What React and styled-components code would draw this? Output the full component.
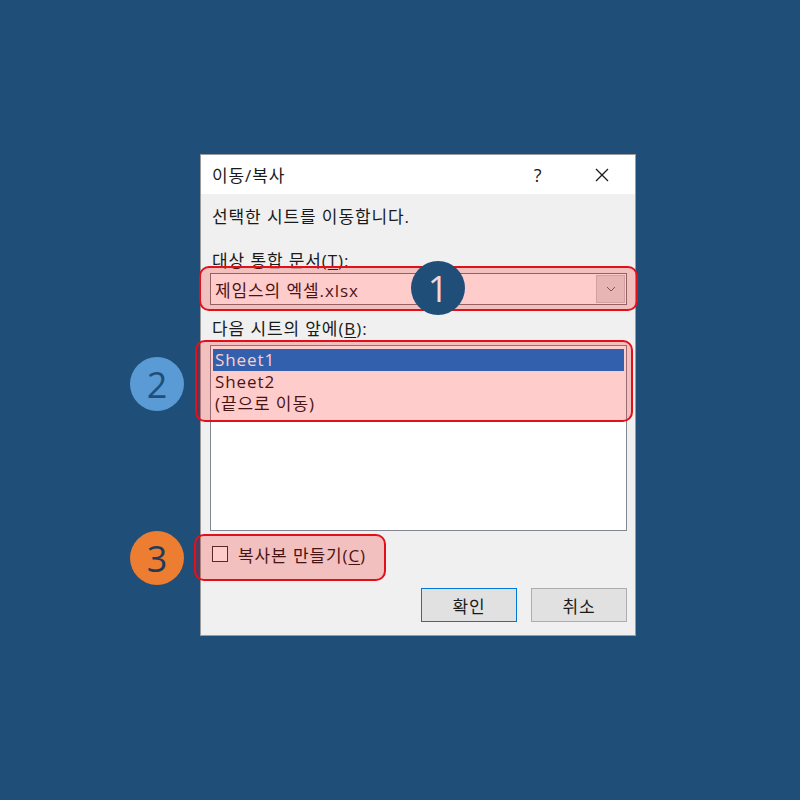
import React from "react";
import styled, { createGlobalStyle } from "styled-components";

const GlobalStyle = createGlobalStyle`
  html, body {
    margin: 0;
    padding: 0;
    background: #1f4e79;
  }
  body {
    font-family: "Open Sans", "Noto Sans CJK KR", sans-serif;
  }
`;

const Page = styled.div`
  width: 800px;
  height: 800px;
  box-sizing: border-box;
  padding: 154px 0 0 200px;
  background: #1f4e79;
`;

const Dialog = styled.div`
  position: relative;
  width: 436px;
  height: 482px;
  box-sizing: border-box;
  border: 1px solid #9b9b9b;
  background: #f0f0f0;
  display: flex;
  flex-direction: column;
  color: #1a1a1a;
  font-size: 17px;
  letter-spacing: 0.9px;
`;

const TitleBar = styled.div`
  height: 39px;
  background: #fff;
  display: flex;
  align-items: center;
  padding-left: 11px;
`;

const Title = styled.div`
  flex: 1;
`;

const TitleButton = styled.div`
  width: ${(p) => p.$w}px;
  display: flex;
  justify-content: center;
  align-items: center;
  font-size: 18px;
`;

const Body = styled.div`
  flex: 1;
  display: flex;
  flex-direction: column;
  padding: 12px 8px 13px 9px;
`;

const Text = styled.div`
  line-height: 22px;
  height: 22px;
  padding-left: 2px;
  margin-top: ${(p) => p.$mt || 0}px;
  white-space: nowrap;
`;

const Key = styled.span`
  text-decoration: underline;
  text-underline-offset: 2px;
`;

const Combo = styled.div`
  margin-top: 1px;
  height: 32px;
  box-sizing: border-box;
  border: 1px solid #7a7a7a;
  background: #fff;
  display: flex;
  align-items: stretch;
`;

const ComboText = styled.div`
  flex: 1;
  display: flex;
  align-items: center;
  padding-left: 4px;
`;

const ComboArrow = styled.div`
  width: 27px;
  margin: 1px;
  background: #e3e3e3;
  border: 1px solid #c8c8c8;
  display: flex;
  align-items: center;
  justify-content: center;
`;

const ListBox = styled.div`
  margin-top: 5px;
  height: 186px;
  box-sizing: border-box;
  border: 1px solid #828790;
  background: #fff;
  padding: 3px 2px;
`;

const ListItem = styled.div`
  height: 22px;
  line-height: 22px;
  padding-left: 2px;
  background: ${(p) => (p.$selected ? "#0078d7" : "transparent")};
  color: ${(p) => (p.$selected ? "#fff" : "#1a1a1a")};
`;

const CheckRow = styled.label`
  margin-top: 12px;
  height: 22px;
  display: flex;
  align-items: center;
  gap: 10px;
  padding-left: 2px;
`;

const CheckBox = styled.span`
  width: 16px;
  height: 16px;
  box-sizing: border-box;
  border: 1px solid #333;
  background: #fff;
`;

const Buttons = styled.div`
  margin-top: auto;
  display: flex;
  justify-content: flex-end;
  gap: 14px;
`;

const Button = styled.button`
  width: 96px;
  height: 34px;
  box-sizing: border-box;
  background: #e1e1e1;
  border: 1px solid ${(p) => (p.$default ? "#0078d7" : "#adadad")};
  font-family: inherit;
  font-size: 17px;
  letter-spacing: 0.9px;
  color: #1a1a1a;
  padding: 0;
`;

const Highlight = styled.div`
  position: absolute;
  left: ${(p) => p.$x}px;
  top: ${(p) => p.$y}px;
  width: ${(p) => p.$w}px;
  height: ${(p) => p.$h}px;
  box-sizing: border-box;
  border: 2.5px solid #e3101a;
  border-radius: 10px;
  background: rgba(255, 0, 0, 0.2);
  pointer-events: none;
`;

const Badge = styled.div`
  position: absolute;
  left: ${(p) => p.$x}px;
  top: ${(p) => p.$y}px;
  width: 54px;
  height: 54px;
  border-radius: 50%;
  background: ${(p) => p.$bg};
  color: ${(p) => p.$fg};
  display: flex;
  align-items: center;
  justify-content: center;
  font-family: "Open Sans", sans-serif;
  font-size: 36px;
  font-weight: 500;
  letter-spacing: 0;
`;

export default function App() {
  return (
    <>
      <GlobalStyle />
      <Page>
        <Dialog>
          <TitleBar>
            <Title>이동/복사</Title>
            <TitleButton $w={62}>?</TitleButton>
            <TitleButton $w={66}>
              <svg width="16" height="16" viewBox="0 0 16 16">
                <path d="M2 2 L14 14 M14 2 L2 14" stroke="#1a1a1a" strokeWidth="1.3" />
              </svg>
            </TitleButton>
          </TitleBar>
          <Body>
            <Text>선택한 시트를 이동합니다.</Text>
            <Text $mt={22}>
              대상 통합 문서(<Key>T</Key>):
            </Text>
            <Combo>
              <ComboText>제임스의 엑셀.xlsx</ComboText>
              <ComboArrow>
                <svg width="10" height="6" viewBox="0 0 10 6">
                  <path d="M1 1 L5 5 L9 1" stroke="#666" strokeWidth="1" fill="none" />
                </svg>
              </ComboArrow>
            </Combo>
            <Text $mt={13}>
              다음 시트의 앞에(<Key>B</Key>):
            </Text>
            <ListBox>
              <ListItem $selected>Sheet1</ListItem>
              <ListItem>Sheet2</ListItem>
              <ListItem>(끝으로 이동)</ListItem>
            </ListBox>
            <CheckRow>
              <CheckBox />
              <span>
                복사본 만들기(<Key>C</Key>)
              </span>
            </CheckRow>
            <Buttons>
              <Button $default>확인</Button>
              <Button>취소</Button>
            </Buttons>
          </Body>

          <Highlight $x={-2} $y={111} $w={439} $h={45} />
          <Highlight $x={-6} $y={185} $w={438} $h={82} />
          <Highlight $x={-7} $y={379} $w={192} $h={47} />

          <Badge $x={210} $y={106} $bg="#1f4e79" $fg="#f3d6d6">1</Badge>
          <Badge $x={-71} $y={202} $bg="#5b9bd5" $fg="#1f4e79">2</Badge>
          <Badge $x={-71} $y={376} $bg="#ed7d31" $fg="#1f3b5c">3</Badge>
        </Dialog>
      </Page>
    </>
  );
}
